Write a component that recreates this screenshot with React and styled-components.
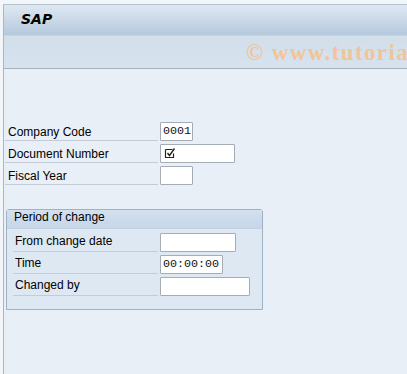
import React from "react";
import styled, { createGlobalStyle } from "styled-components";

const Global = createGlobalStyle`
  html, body { margin: 0; padding: 0; background: #f3f6f9; }
  body { width: 407px; height: 374px; overflow: hidden; font-family: "Liberation Sans", Arial, sans-serif; }
  #root { height: 100%; }
`;

const Frame = styled.div`
  margin: 4px 0 0 3px;
  height: 370px;
  display: flex;
  flex-direction: column;
  border-left: 1px solid #a9b6c4;
  border-top: 1px solid #b4c2d0;
`;

const TitleBar = styled.div`
  height: 30px;
  flex: none;
  display: flex;
  align-items: center;
  padding-left: 17px;
  background: linear-gradient(#dfe8f2, #b5c9dd);
`;

const Title = styled.span`
  font-family: "DejaVu Sans", Verdana, sans-serif;
  font-weight: bold;
  font-style: italic;
  font-size: 14px;
  color: #000;
  margin-top: -2px;
`;

const Toolbar = styled.div`
  height: 32px;
  flex: none;
  display: flex;
  align-items: center;
  overflow: hidden;
  white-space: nowrap;
  padding-left: 242px;
  background: linear-gradient(#d2dfeb, #d6e2ee);
  border-top: 1px solid #c6d4e2;
  border-bottom: 1px solid #a3b1c0;
`;

const Watermark = styled.span`
  font-family: "Liberation Serif", "Times New Roman", serif;
  font-weight: bold;
  font-size: 23px;
  letter-spacing: 1.4px;
  color: #f2c497;
  margin-top: 2px;
`;

const Body = styled.div`
  flex: 1;
  background: #e9eff6;
  padding: 51px 0 0 1px;
`;

const Row = styled.div`
  display: flex;
  align-items: center;
  height: 22px;
`;

const Label = styled.div`
  width: ${(p) => p.$w}px;
  height: 21px;
  box-sizing: border-box;
  display: flex;
  align-items: flex-end;
  padding-left: ${(p) => p.$pad}px;
  padding-bottom: ${(p) => p.$lift || 0}px;
  border-bottom: 1px solid #c3ccd6;
  font-size: 12px;
  line-height: 16px;
  color: #000;
  align-self: flex-start;
`;

const Field = styled.div`
  width: ${(p) => p.$w}px;
  height: 19px;
  box-sizing: border-box;
  margin-left: 2px;
  display: flex;
  align-items: center;
  padding-left: 2px;
  background: #fff;
  border: 1px solid #a4acb6;
  border-radius: 1px;
  font-family: "Liberation Mono", "Courier New", monospace;
  font-size: 11.7px;
  color: #111;
`;

const Group = styled.div`
  width: 257px;
  box-sizing: border-box;
  margin: 23px 0 0 1px;
  border: 1px solid #9fb1c5;
  border-radius: 3px 3px 0 0;
  background: #dee8f3;
  padding-bottom: 12px;
`;

const GroupHeader = styled.div`
  height: 19px;
  box-sizing: border-box;
  display: flex;
  align-items: flex-start;
  padding-left: 7px;
  line-height: 14px;
  background: linear-gradient(#d3e0ee, #c6d7e8);
  border-bottom: 1px solid #c2d2e2;
  font-size: 12px;
  color: #000;
  margin-bottom: 2px;
`;

const GroupRows = styled.div`
  padding-left: 6px;
`;

const CheckIcon = () => (
  <svg width="12" height="12" viewBox="0 0 12 12" style={{ marginLeft: 1 }}>
    <path d="M1.5 2.5 H8.5 M1.5 2.5 V10.5 H9.5 V6.5" fill="none" stroke="#222" strokeWidth="1.2" />
    <path d="M3.5 6 L5.5 8.5 L10.5 1.5" fill="none" stroke="#222" strokeWidth="1.4" />
  </svg>
);

export default function App() {
  return (
    <>
      <Global />
      <Frame>
        <TitleBar>
          <Title>SAP</Title>
        </TitleBar>
        <Toolbar>
          <Watermark>© www.tutoria</Watermark>
        </Toolbar>
        <Body>
          <Row>
            <Label $w={153} $pad={3}>Company Code</Label>
            <Field $w={33}>0001</Field>
          </Row>
          <Row>
            <Label $w={153} $pad={3}>Document Number</Label>
            <Field $w={75}><CheckIcon /></Field>
          </Row>
          <Row>
            <Label $w={153} $pad={3}>Fiscal Year</Label>
            <Field $w={33} />
          </Row>
          <Group>
            <GroupHeader>Period of change</GroupHeader>
            <GroupRows>
              <Row>
                <Label $w={145} $pad={2} $lift={2}>From change date</Label>
                <Field $w={76} />
              </Row>
              <Row>
                <Label $w={145} $pad={2} $lift={2}>Time</Label>
                <Field $w={63}>00:00:00</Field>
              </Row>
              <Row>
                <Label $w={145} $pad={2} $lift={2}>Changed by</Label>
                <Field $w={90} />
              </Row>
            </GroupRows>
          </Group>
        </Body>
      </Frame>
    </>
  );
}
